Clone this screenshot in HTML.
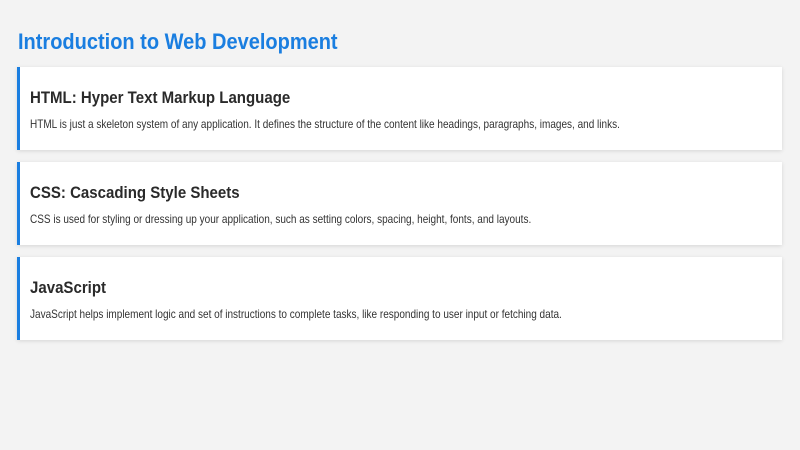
<!DOCTYPE html>
<html><head><style>
body{margin:0;background:#f3f3f3;font-family:"Liberation Sans",sans-serif;width:800px;height:450px;overflow:hidden}
h1{position:absolute;left:18px;top:29px;margin:0;font-size:22px;line-height:26px;color:#1a7ee0;font-weight:bold;transform:scaleX(0.909);transform-origin:0 0;white-space:nowrap}
.card{position:absolute;left:17px;width:762px;height:83px;background:#fff;border-left:3px solid #1a7ee0;box-shadow:0 1px 4px rgba(0,0,0,0.12)}
.card h2{position:absolute;left:10px;top:21px;margin:0;font-size:17px;line-height:20px;color:#2a2a2a;font-weight:bold;transform:scaleX(0.884);transform-origin:0 0;white-space:nowrap}
.card p{position:absolute;left:10px;top:50px;margin:0;font-size:12px;line-height:14px;color:#333;transform:scaleX(0.834);transform-origin:0 0;white-space:nowrap}
</style></head><body>
<h1>Introduction to Web Development</h1>
<div class="card" style="top:67px"><h2>HTML: Hyper Text Markup Language</h2><p>HTML is just a skeleton system of any application. It defines the structure of the content like headings, paragraphs, images, and links.</p></div>
<div class="card" style="top:162px"><h2>CSS: Cascading Style Sheets</h2><p>CSS is used for styling or dressing up your application, such as setting colors, spacing, height, fonts, and layouts.</p></div>
<div class="card" style="top:257px"><h2>JavaScript</h2><p>JavaScript helps implement logic and set of instructions to complete tasks, like responding to user input or fetching data.</p></div>
</body></html>
